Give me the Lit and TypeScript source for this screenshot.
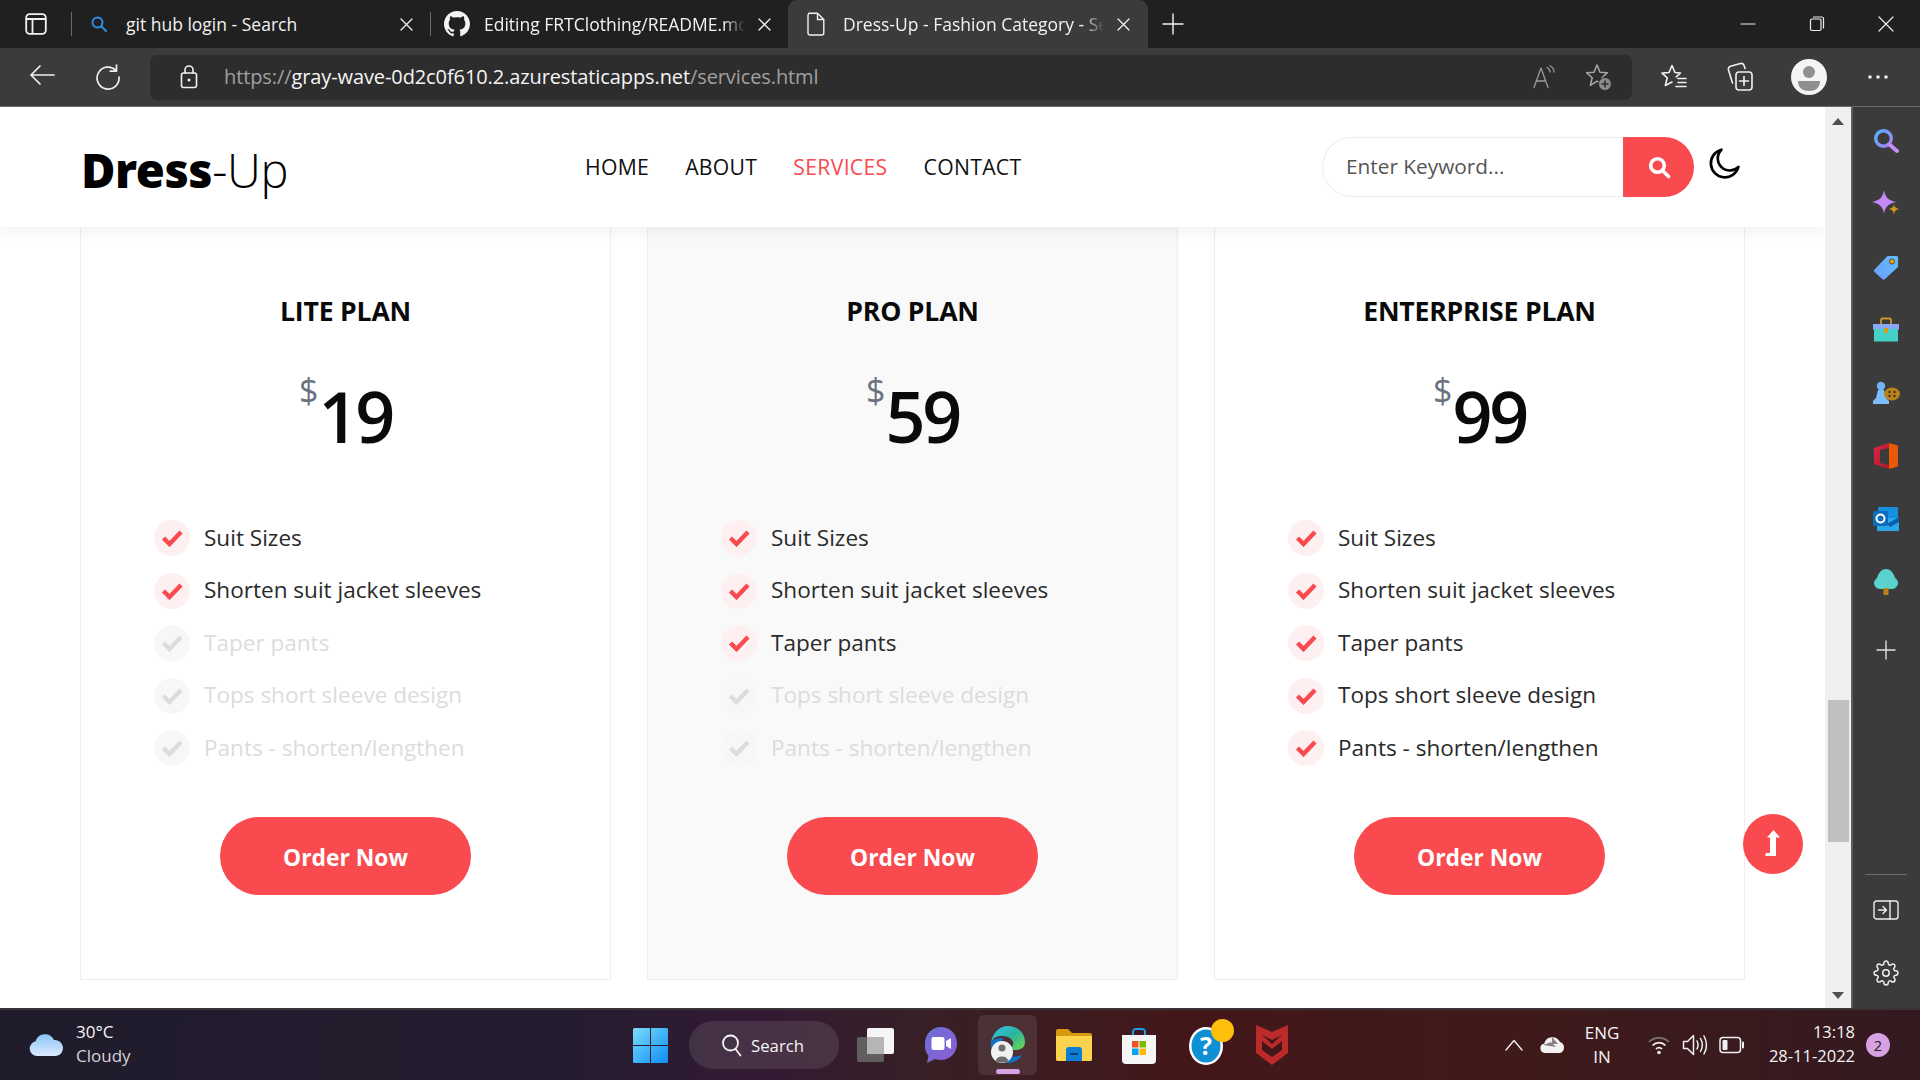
import { LitElement, html, css, svg } from "lit";
import { customElement } from "lit/decorators.js";

const ic = (w: number, h: number, vb: string, body: unknown) =>
  html`<svg width=${w} height=${h} viewBox=${vb} fill="none" stroke-linecap="round" stroke-linejoin="round">${body}</svg>`;

const closeX = (w = 13) => ic(w, w, "0 0 13 13", svg`<path d="M1 1l11 11M12 1L1 12" stroke="#f2f2f2" stroke-width="1.3"/>`);

const check = (c: string) => ic(22, 18, "0 0 22 18", svg`<path d="M2.5 9l6 6L20 3" stroke=${c} stroke-width="4.4" stroke-linecap="butt" stroke-linejoin="miter"/>`);

const FEATURES = ["Suit Sizes", "Shorten suit jacket sleeves", "Taper pants", "Tops short sleeve design", "Pants - shorten/lengthen"];
const PLANS = [
  { name: "LITE PLAN", price: "19", on: 2, alt: false },
  { name: "PRO PLAN", price: "59", on: 3, alt: true },
  { name: "ENTERPRISE PLAN", price: "99", on: 5, alt: false },
];

@customElement("app-root")
export class AppRoot extends LitElement {
  static styles = css`
    :host { display: block; width: 1920px; height: 1080px; overflow: hidden; font-family: "Open Sans", "Noto Sans", sans-serif; background: #fff; }
    svg { display: block; flex: none; }
    .shell { display: grid; grid-template-rows: 48px 58px 1px 901px 72px; height: 1080px; }

    .tabs { background: #202020; display: grid; grid-template-columns: 71px 359px 358px 360px 50px 1fr; align-items: stretch; color: #f2f2f2; font-size: 17.5px; }
    .tabs > .sq { display: flex; align-items: center; justify-content: center; }
    .tab { display: flex; align-items: center; position: relative; min-width: 0; }
    .tab.div::before { content: ""; position: absolute; left: 0; top: 12px; height: 24px; width: 1px; background: #6a6a6a; }
    .tab .ti { width: 54px; display: flex; justify-content: center; flex: none; }
    .tab.first .ti { width: 55px; }
    .tab .tt { flex: 1; min-width: 0; white-space: nowrap; overflow: hidden; -webkit-mask-image: linear-gradient(90deg, #000 92%, transparent 100%); mask-image: linear-gradient(90deg, #000 92%, transparent 100%); }
    .tab .tx { width: 38px; display: flex; justify-content: center; flex: none; margin-right: 5px; }
    .tab.first .tt { -webkit-mask-image: none; mask-image: none; }
    .tab.active { background: #3b3b3b; border-radius: 9px 9px 0 0; }
    .tab.active .ti { width: 55px; }
    .tab.active .tx { margin-right: 6px; }
    .winctl { display: grid; grid-template-columns: repeat(3, 69px); justify-content: end; }
    .winctl > div { display: flex; align-items: center; justify-content: center; }

    .toolbar { background: #3b3b3b; display: grid; grid-template-columns: 150px 1482px 1fr; align-items: center; }
    .nav-btns { display: grid; grid-template-columns: 84px 48px; justify-items: center; }
    .addr { height: 45px; background: #2d2d2d; border-radius: 7px; display: flex; align-items: center; color: #a0a0a0; font-size: 20px; letter-spacing: -0.1px; }
    .addr .lock { width: 74px; padding-left: 4px; box-sizing: border-box; display: flex; justify-content: center; flex: none; }
    .addr b { font-weight: 400; color: #f5f5f5; }
    .addr .url { flex: 1; white-space: nowrap; padding-bottom: 2px; }
    .addr .r1 { width: 54px; display: flex; justify-content: center; }
    .addr .pad { width: 6px; flex: none; }
    .tools { display: grid; grid-template-columns: 84px 48px 90px 48px; justify-items: center; align-items: center; }
    .rule { background: #6a6a6a; }

    .main { display: grid; grid-template-columns: 1825px 26px 69px; min-height: 0; }
    .page { position: relative; overflow: hidden; background: #fff; display: flex; flex-direction: column; }
    header { height: 120px; flex: none; background: #fff; box-shadow: 0 6px 14px rgba(0,0,0,.05); position: relative; z-index: 2; display: grid; grid-template-columns: 504px 737px 372px auto; align-items: center; padding-left: 81px; box-sizing: border-box; }
    .logo { font-size: 47px; line-height: 1; color: #000; padding-top: 6px; letter-spacing: -0.4px; white-space: nowrap; }
    .logo b { font-family: "Noto Sans", sans-serif; font-weight: 900; }
    .logo span { font-family: "Open Sans", sans-serif; font-weight: 300; }
    nav { display: flex; gap: 36px; font-size: 21.2px; color: #111; letter-spacing: 0.3px; padding-bottom: 1px; white-space: nowrap; }
    nav .on { color: #f84a4f; }
    .search { display: flex; height: 60px; align-items: stretch; margin-top: -1px; }
    .search .in { flex: 1; border: 1px solid #eee; border-right: 0; border-radius: 30px 0 0 30px; display: flex; align-items: center; padding: 0 0 1px 23px; color: #555; font-size: 20.8px; }
    .search .go { width: 71px; background: #f84a4f; border-radius: 0 30px 30px 0; display: flex; align-items: center; justify-content: center; }
    .moon { padding-left: 14px; margin-top: -7px; }

    .cards { display: grid; grid-template-columns: repeat(3, 531px); gap: 36px; padding-left: 80px; flex: 1; align-items: start; }
    .card { height: 753px; box-sizing: border-box; border: 1px solid #eee; border-top: 0; padding-top: 66px; }
    .card.alt { background: #f9f9f9; }
    .card h3 { margin: 0; font-size: 26.6px; line-height: 36px; font-weight: 700; color: #0a0a0a; text-align: center; letter-spacing: -0.2px; }
    .price { display: flex; justify-content: center; margin-top: 41px; height: 90px; color: #0a0a0a; font-size: 70px; line-height: 92px; letter-spacing: -3.2px; font-weight: 600; }
    .price sup { font-size: 34px; line-height: 41px; color: #6b7280; font-weight: 400; letter-spacing: 0; vertical-align: baseline; margin-right: 0; }
    ul { list-style: none; margin: 60px 0 0; padding: 0 0 0 73px; display: flex; flex-direction: column; gap: 16.5px; }
    li { display: flex; align-items: center; gap: 14px; height: 36px; color: #2a2a2a; font-size: 22.55px; white-space: nowrap; line-height: 34px; }
    li .dot { width: 36px; height: 36px; border-radius: 50%; background: #fef0f0; display: flex; align-items: center; justify-content: center; flex: none; }
    li span.lab { padding-bottom: 1px; }
    li.off { color: #dcdcdc; }
    li.off .dot { background: #f7f7f7; }
    .order { display: flex; align-items: center; justify-content: center; width: 251px; height: 78px; margin: 51px auto 0; background: #f84a4f; color: #fff; border-radius: 39px; font-size: 22.8px; font-weight: 700; padding-top: 2px; box-sizing: border-box; }
    .totop { position: absolute; left: 1743px; top: 707px; width: 60px; height: 60px; border-radius: 50%; background: #f84a4f; display: flex; align-items: center; justify-content: center; z-index: 3; }

    .scroll { background: #f0f0f0; display: flex; flex-direction: column; align-items: center; }
    .arr { height: 29px; display: flex; align-items: center; justify-content: center; flex: none; }
    .arr.dn { padding-top: 3px; height: 26px; }
    .track { flex: 1; width: 21px; padding-top: 564px; box-sizing: border-box; }
    .thumb { height: 142px; background: #c0c0c0; }

    .side { background: #3b3b3b; border-left: 2px solid #5e5e5e; display: flex; flex-direction: column; align-items: center; padding: 2px 2px 0 0; box-sizing: border-box; }
    .side .i { height: 63px; display: flex; align-items: center; justify-content: center; flex: none; }
    .side .plus { margin-top: 5px; }
    .side .sp { flex: 1; }
    .side .line { width: 42px; height: 1px; background: #6c6c6c; flex: none; }
    .side .b1 { height: 70px; display: flex; align-items: center; justify-content: center; flex: none; }
    .side .b2 { height: 56px; display: flex; align-items: center; justify-content: center; flex: none; margin-bottom: 7px; }

    .taskbar { background: linear-gradient(90deg, #201c2c 0%, #231c2e 28%, #331a33 40%, #372026 48%, #431719 62%, #3f1a1b 80%, #331a20 100%); border-top: 2px solid #3a3438; box-sizing: border-box; display: grid; grid-template-columns: 76px 557px 35px 21px 150px 18px 37px 30px 34px 20px 59px 19px 36px 30px 34px 32px 36px 31px 34px 205px 40px 38px 60px 12px 30px 6px 30px 7px 30px 108px 1fr; align-items: center; color: #f4f4f4; }
    .taskbar .c { display: flex; justify-content: center; align-items: center; height: 70px; position: relative; }
    .taskbar .cloud { padding-left: 16px; }
    .weather { font-size: 17px; line-height: 24px; padding-bottom: 3px; white-space: nowrap; }
    .weather div + div { color: #d4d4d4; }
    .pill { height: 48px; background: rgba(255,255,255,.1); border-radius: 24px; display: flex; align-items: center; padding-left: 32px; gap: 8px; font-size: 16.8px; color: #f4f4f4; }
    .edge { background: rgba(255,255,255,.09); border-radius: 6px; height: 60px !important; }
    .edge::after { content: ""; position: absolute; left: 18px; bottom: 1px; width: 24px; height: 5px; border-radius: 3px; background: #d8a1e3; }
    .lang { font-size: 17px; line-height: 24px; text-align: center; }
    .clock { font-size: 16.5px; line-height: 24px; text-align: right; white-space: nowrap; padding-bottom: 2px; }
    .badge { width: 24px; height: 24px; border-radius: 50%; background: #d8a1e3; color: #222; font-size: 14.5px; display: flex; align-items: center; justify-content: center; margin-left: 11px; }
    .yellow { position: absolute; left: 23px; top: 9px; width: 23px; height: 23px; border-radius: 50%; background: #fdbe0c; }
  `;

  render() {
    return html`<div class="shell">
      ${this.tabs()}
      ${this.toolbar()}
      <div class="rule"></div>
      <div class="main">
        <div class="page">
          <header>
            <div class="logo"><b>Dress</b><span>-Up</span></div>
            <nav><span>HOME</span><span>ABOUT</span><span class="on">SERVICES</span><span>CONTACT</span></nav>
            <div class="search">
              <div class="in">Enter Keyword...</div>
              <div class="go">${ic(24, 24, "0 0 24 24", svg`<circle cx="10.5" cy="10.5" r="6.8" stroke="#fff" stroke-width="3.6"/><path d="M16 16l5.5 5.5" stroke="#fff" stroke-width="3.6"/>`)}</div>
            </div>
            <div class="moon">${ic(33, 33, "0 0 32 32", svg`<path d="M29.5 19.4A13.6 13.6 0 1 1 13 2.6 11 11 0 0 0 29.5 19.4z" stroke="#000" stroke-width="2.6"/>`)}</div>
          </header>
          <div class="cards">
            ${PLANS.map((p) => html`<div class="card ${p.alt ? "alt" : ""}">
              <h3>${p.name}</h3>
              <div class="price"><sup>$</sup><span>${p.price}</span></div>
              <ul>
                ${FEATURES.map((f, i) => html`<li class=${i < p.on ? "" : "off"}><span class="dot">${check(i < p.on ? "#f84a4f" : "#dcdcdc")}</span><span class="lab">${f}</span></li>`)}
              </ul>
              <div class="order">Order Now</div>
            </div>`)}
          </div>
          <div class="totop">
            <svg width="20" height="28" viewBox="0 0 20 28"><path d="M10.5 0L17 7.5h-4V26H2.5v-3H7V7.5H4z" fill="#fff"/></svg>
          </div>
        </div>
        ${this.scrollbar()}
        ${this.sidebar()}
      </div>
      ${this.taskbar()}
    </div>`;
  }

  tabs() {
    return html`<div class="tabs">
      <div class="sq">${ic(22, 22, "0 0 22 22", svg`<rect x="1.2" y="1.2" width="19.6" height="19.6" rx="3.5" stroke="#f2f2f2" stroke-width="1.8"/><path d="M1.5 6h19M7.5 6v14.5" stroke="#f2f2f2" stroke-width="1.8"/>`)}</div>
      <div class="tab div first">
        <div class="ti">${ic(18, 18, "0 0 18 18", svg`<circle cx="7.5" cy="7.5" r="5" stroke="#2f8fe8" stroke-width="2"/><path d="M11.5 11.5l4.5 4.5" stroke="#2f8fe8" stroke-width="2"/>`)}</div>
        <div class="tt">git hub login - Search</div>
        <div class="tx">${closeX()}</div>
      </div>
      <div class="tab div">
        <div class="ti">
          <svg width="26" height="26" viewBox="0 0 16 16"><path fill="#f4f4f4" d="M8 0C3.58 0 0 3.58 0 8c0 3.54 2.29 6.53 5.47 7.59.4.07.55-.17.55-.38 0-.19-.01-.82-.01-1.49-2.01.37-2.53-.49-2.69-.94-.09-.23-.48-.94-.82-1.13-.28-.15-.68-.52-.01-.53.63-.01 1.08.58 1.23.82.72 1.21 1.87.87 2.33.66.07-.52.28-.87.51-1.07-1.78-.2-3.64-.89-3.64-3.95 0-.87.31-1.59.82-2.15-.08-.2-.36-1.02.08-2.12 0 0 .67-.21 2.2.82.64-.18 1.32-.27 2-.27s1.36.09 2 .27c1.53-1.04 2.2-.82 2.2-.82.44 1.1.16 1.92.08 2.12.51.56.82 1.27.82 2.15 0 3.07-1.87 3.75-3.65 3.95.29.25.54.73.54 1.48 0 1.07-.01 1.93-.01 2.2 0 .21.15.46.55.38A8.01 8.01 0 0016 8c0-4.42-3.58-8-8-8z"/></svg>
        </div>
        <div class="tt">Editing FRTClothing/README.md</div>
        <div class="tx">${closeX()}</div>
      </div>
      <div class="tab active">
        <div class="ti">${ic(18, 24, "0 0 18 24", svg`<path d="M2 1.2h8.5L16.8 7.5V21a2 2 0 0 1-2 2H3a2 2 0 0 1-2-2V3z M10.5 1.2V7.5h6.3" stroke="#f2f2f2" stroke-width="1.4"/>`)}</div>
        <div class="tt">Dress-Up - Fashion Category - Se</div>
        <div class="tx">${closeX()}</div>
      </div>
      <div class="sq">${ic(22, 22, "0 0 22 22", svg`<path d="M11 1v20M1 11h20" stroke="#f2f2f2" stroke-width="1.4"/>`)}</div>
      <div class="winctl">
        <div>${ic(16, 16, "0 0 16 16", svg`<path d="M1 8h14" stroke="#eee" stroke-width="1.2"/>`)}</div>
        <div>${ic(16, 16, "0 0 16 16", svg`<rect x="1.5" y="3" width="10.5" height="11.5" rx="1.5" stroke="#eee" stroke-width="1.2"/><path d="M4.5 1h8a2 2 0 0 1 2 2v9" stroke="#eee" stroke-width="1.2"/>`)}</div>
        <div>${ic(16, 16, "0 0 16 16", svg`<path d="M1 1l14 14M15 1L1 15" stroke="#eee" stroke-width="1.2"/>`)}</div>
      </div>
    </div>`;
  }

  toolbar() {
    const w = "#f0f0f0";
    return html`<div class="toolbar">
      <div class="nav-btns">
        ${ic(26, 22, "0 0 26 22", svg`<path d="M25 11H2M11 2l-9 9 9 9" stroke=${w} stroke-width="1.7"/>`)}
        ${ic(26, 26, "0 0 26 26", svg`<path d="M21 6.5A11 11 0 1 0 24 13" stroke=${w} stroke-width="1.7"/><path d="M21.5 1v6.2h-6.2" stroke=${w} stroke-width="1.7"/>`)}
      </div>
      <div class="addr">
        <div class="lock">${ic(18, 24, "0 0 18 24", svg`<rect x="1.5" y="8" width="15" height="14.5" rx="2" stroke=${w} stroke-width="1.6"/><path d="M5 8V5a4 4 0 0 1 8 0v3" stroke=${w} stroke-width="1.6"/><circle cx="9" cy="15" r="1.5" fill=${w}/>`)}</div>
        <div class="url">https://<b>gray-wave-0d2c0f610.2.azurestaticapps.net</b>/services.html</div>
        <div class="r1">${ic(26, 24, "0 0 26 24", svg`<path d="M2 22.5L9 3l7 19.5M4.5 16h9" stroke="#9a9a9a" stroke-width="1.3"/><path d="M15 2.5c2 1 3 2.6 3 4.5M18 .8c2.5 1.4 4 3.6 4 6.2" stroke="#9a9a9a" stroke-width="1.3"/>`)}</div>
        <div class="r1">${ic(28, 28, "0 0 28 28", svg`<path d="M12 2l3 7.2 7.4.6-5.6 4.9 1.8 7.5L12 18.200l-6.600 4.100 1.800-7.500L1.600 9.800 9 9.200z" stroke="#a8a8a8" stroke-width="1.5"/><circle cx="20" cy="21" r="6.500" fill="#8c8c8c" stroke="#2d2d2d" stroke-width="1"/><path d="M20 18v6M17 21h6" stroke="#2d2d2d" stroke-width="1.6"/>`)}</div>
        <div class="pad"></div>
      </div>
      <div class="tools">
        ${ic(28, 28, "0 0 28 28", svg`<path d="M12 2.5l3 7 5.500.5-4.300 3.800M12 2.500l-3 7-7 .6 5.300 4.700-2 7.700L12 19" stroke=${w} stroke-width="1.6"/><path d="M18 15.500h8M18 19.500h8M16 23.500h10" stroke=${w} stroke-width="1.6"/>`)}
        ${ic(28, 30, "0 0 28 30", svg`<rect x="10" y="10" width="16" height="18" rx="3" stroke=${w} stroke-width="1.6"/><path d="M18 14.500v9M13.500 19h9" stroke=${w} stroke-width="1.6"/><path d="M6.500 21L2.500 8a3 3 0 0 1 2-3.700l10-2.800a3 3 0 0 1 3.600 2L19 6.500" stroke=${w} stroke-width="1.6"/>`)}
        <svg width="36" height="36" viewBox="0 0 36 36"><circle cx="18" cy="18" r="18" fill="#f4f4f4"/><circle cx="18" cy="13" r="6" fill="#8f8f8f"/><path d="M7 22h22c0 7-5 10-11 10S7 29 7 22z" fill="#8f8f8f"/></svg>
        ${ic(22, 6, "0 0 22 6", svg`<circle cx="3" cy="3" r="1.8" fill=${w}/><circle cx="11" cy="3" r="1.8" fill=${w}/><circle cx="19" cy="3" r="1.8" fill=${w}/>`)}
      </div>
    </div>`;
  }

  scrollbar() {
    return html`<div class="scroll">
      <div class="arr"><svg width="12" height="7" viewBox="0 0 12 7"><path d="M6 0l6 7H0z" fill="#505050"/></svg></div>
      <div class="track"><div class="thumb"></div></div>
      <div class="arr dn"><svg width="12" height="7" viewBox="0 0 12 7"><path d="M0 0h12L6 7z" fill="#505050"/></svg></div>
    </div>`;
  }

  sidebar() {
    return html`<div class="side">
      <div class="i"><svg width="26" height="26" viewBox="0 0 26 26"><defs><linearGradient id="s1" x1="0" y1="0" x2="1" y2="1"><stop offset="0" stop-color="#50b4ff"/><stop offset="1" stop-color="#b07cf0"/></linearGradient></defs><circle cx="10.5" cy="10.5" r="7.8" fill="none" stroke="url(#s1)" stroke-width="3.4"/><path d="M17 17l7 6" stroke="#c58df2" stroke-width="4" stroke-linecap="round"/></svg></div>
      <div class="i"><svg width="28" height="27" viewBox="0 0 28 27"><path d="M12 0c1.200 7 3.500 10 12 12-8.500 2-10.800 5-12 12-1.200-7-3.500-10-12-12 8.500-2 10.800-5 12-12z" fill="#c488f8"/><path d="M22 14c.4 3 1.600 4.200 5.500 5-3.900.8-5.100 2-5.500 6-.4-4-1.600-5.200-5.500-6 3.900-.8 5.100-2 5.500-5z" fill="#d1941c"/></svg></div>
      <div class="i"><svg width="26" height="26" viewBox="0 0 26 26"><defs><linearGradient id="s3" x1="0" y1="1" x2="1" y2="0"><stop offset="0" stop-color="#6f9cff"/><stop offset="1" stop-color="#5fc0fa"/></linearGradient></defs><path d="M1.500 15.500L14 2.500a2 2 0 0 1 1.500-.6h8a1.600 1.600 0 0 1 1.600 1.600v8.500a2 2 0 0 1-.6 1.400L12 25a2 2 0 0 1-2.800 0L1.500 18a2 2 0 0 1 0-2.500z" fill="url(#s3)"/><circle cx="19" cy="7.500" r="2.600" fill="#e8a21c" stroke="#3a3a3a" stroke-width=".8"/></svg></div>
      <div class="i"><svg width="28" height="26" viewBox="0 0 28 26"><path d="M9 7V3a1.500 1.500 0 0 1 1.500-1.500h7A1.500 1.500 0 0 1 19 3v4" fill="none" stroke="#c79a2c" stroke-width="1.8"/><rect x="1" y="7" width="26" height="5.500" fill="#8aa6f5"/><rect x="2" y="12" width="24" height="12.500" fill="#45d0c8"/><rect x="12" y="11" width="4" height="5" fill="#d39a22"/></svg></div>
      <div class="i"><svg width="28" height="24" viewBox="0 0 28 24"><circle cx="9" cy="5" r="4.200" fill="#6fb4f5"/><path d="M6 9h6l2 8 3 3v3H1v-3l3-3z" fill="#7dbdfb"/><ellipse cx="20" cy="13" rx="8" ry="6.500" fill="#b9831c"/><circle cx="17.500" cy="11" r="1.200" fill="#4a3308"/><circle cx="22.500" cy="11" r="1.200" fill="#4a3308"/><circle cx="17.500" cy="15" r="1.200" fill="#4a3308"/><circle cx="22.500" cy="15" r="1.200" fill="#4a3308"/></svg></div>
      <div class="i"><svg width="26" height="28" viewBox="0 0 26 28"><defs><linearGradient id="s6" x1="0" y1="0" x2="1" y2="1"><stop offset="0" stop-color="#e0244a"/><stop offset="1" stop-color="#a81c24"/></linearGradient></defs><path d="M1 6L16 1v26L1 22z" fill="url(#s6)"/><path d="M16 1l9 2.500v21L16 27z" fill="#e85a08"/><path d="M7 8l9-2v17l-9-2z" fill="#3b3b3b"/></svg></div>
      <div class="i"><svg width="26" height="26" viewBox="0 0 26 26"><rect x="5" y="1" width="20" height="14" rx="1" fill="#1490df"/><path d="M4 12h22v12a1 1 0 0 1-1 1H5a1 1 0 0 1-1-1z" fill="#28a8ea"/><path d="M14 18l12-7v5l-9 5z" fill="#0a5fa8"/><rect x="0" y="5" width="15" height="15" rx="1.500" fill="#0f6cbd"/><circle cx="7.500" cy="12.500" r="4" fill="none" stroke="#fff" stroke-width="2"/></svg></div>
      <div class="i"><svg width="26" height="28" viewBox="0 0 26 28"><path d="M13 1c5 0 8 5 9 9 2 1 3 3 3 5 0 3-3 6-6 6H7c-3 0-6-3-6-6 0-2 1.500-4 3-5 1-4 4-9 9-9z" fill="#5ad2cd"/><rect x="10.500" y="20" width="5" height="7" fill="#b9831c"/></svg></div>
      <div class="i plus">${ic(20, 20, "0 0 20 20", svg`<path d="M10 1v18M1 10h18" stroke="#e0e0e0" stroke-width="1.4"/>`)}</div>
      <div class="sp"></div>
      <div class="line"></div>
      <div class="b1">${ic(26, 20, "0 0 26 20", svg`<rect x="1" y="1" width="24" height="18" rx="2.500" stroke="#eee" stroke-width="1.4"/><path d="M17 1v18M5.500 10h7.500M10 6.500l3.500 3.500-3.500 3.500" stroke="#eee" stroke-width="1.4"/>`)}</div>
      <div class="b2"><svg width="26" height="26" viewBox="0 0 24 24" fill="none" stroke="#eee" stroke-width="1.400" stroke-linejoin="round"><circle cx="12" cy="12" r="3"/><path d="M19.400 15a1.650 1.650 0 0 0 .33 1.820l.06.06a2 2 0 0 1 0 2.830 2 2 0 0 1-2.830 0l-.06-.06a1.650 1.650 0 0 0-1.820-.33 1.650 1.650 0 0 0-1 1.510V21a2 2 0 0 1-2 2 2 2 0 0 1-2-2v-.09A1.650 1.650 0 0 0 9 19.400a1.650 1.650 0 0 0-1.820.33l-.06.06a2 2 0 0 1-2.830 0 2 2 0 0 1 0-2.830l.06-.06a1.650 1.650 0 0 0 .33-1.820 1.650 1.650 0 0 0-1.510-1H3a2 2 0 0 1-2-2 2 2 0 0 1 2-2h.09A1.650 1.650 0 0 0 4.600 9a1.650 1.650 0 0 0-.33-1.820l-.06-.06a2 2 0 0 1 0-2.830 2 2 0 0 1 2.830 0l.06.06a1.650 1.650 0 0 0 1.820.33H9a1.650 1.650 0 0 0 1-1.510V3a2 2 0 0 1 2-2 2 2 0 0 1 2 2v.09a1.650 1.650 0 0 0 1 1.510 1.650 1.650 0 0 0 1.820-.33l.06-.06a2 2 0 0 1 2.830 0 2 2 0 0 1 0 2.830l-.06.06a1.650 1.650 0 0 0-.33 1.820V9a1.650 1.650 0 0 0 1.510 1H21a2 2 0 0 1 2 2 2 2 0 0 1-2 2h-.09a1.650 1.650 0 0 0-1.510 1z"/></svg></div>
    </div>`;
  }

  taskbar() {
    return html`<div class="taskbar">
      <div class="c cloud"><svg width="36" height="24" viewBox="0 0 36 24"><defs><linearGradient id="cl" x1="0" y1="0" x2="0" y2="1"><stop offset="0" stop-color="#8cc4f8"/><stop offset="1" stop-color="#dbeafd"/></linearGradient></defs><path d="M9 23a7.500 7.500 0 0 1-1.500-14.800A10 10 0 0 1 26 7a8 8 0 0 1 2 16z" fill="url(#cl)"/></svg></div>
      <div class="weather"><div>30°C</div><div>Cloudy</div></div>
      <div class="c"><svg width="35" height="35" viewBox="0 0 35 35"><defs><linearGradient id="w1" x1="0" y1="0" x2="1" y2="1"><stop offset="0" stop-color="#7cdcfb"/><stop offset="1" stop-color="#0b8df5"/></linearGradient></defs><path d="M0 1.500a1.500 1.500 0 0 1 1.500-1.500H17v17H0zM18 0h15.500A1.500 1.500 0 0 1 35 1.500V17H18zM0 18h17v17H1.500A1.500 1.500 0 0 1 0 33.500zM18 18h17v15.500a1.500 1.500 0 0 1-1.500 1.500H18z" fill="url(#w1)"/></svg></div>
      <div></div>
      <div class="pill">${ic(22, 24, "0 0 22 24", svg`<circle cx="9.500" cy="10" r="7.500" stroke="#f4f4f4" stroke-width="1.800"/><path d="M14.500 16l5 6.500" stroke="#f4f4f4" stroke-width="1.800"/>`)}<span>Search</span></div>
      <div></div>
      <div class="c"><svg width="37" height="34" viewBox="0 0 37 34"><rect x="10" y="0" width="27" height="26" rx="2" fill="#f5f5f5"/><rect x="0" y="9" width="27" height="25" rx="2" fill="#6a6a6a" fill-opacity=".85"/><rect x="10" y="9" width="17" height="17" fill="#b5b5b5"/></svg></div>
      <div></div>
      <div class="c"><svg width="34" height="38" viewBox="0 0 34 38"><defs><linearGradient id="ch" x1="0" y1="0" x2="1" y2="1"><stop offset="0" stop-color="#6d6fd8"/><stop offset="1" stop-color="#8a5ed0"/></linearGradient></defs><path d="M17 1c9 0 16 7 16 16.500S26 34 17 34c-2 0-4-.3-6-1l-8 4 1.500-7A17 17 0 0 1 1 17.500C1 8 8 1 17 1z" fill="url(#ch)"/><rect x="7.500" y="11" width="13" height="13" rx="2" fill="#fff"/><path d="M22 15l5-3v11l-5-3z" fill="#fff"/></svg></div>
      <div></div>
      <div class="c edge"><svg width="36" height="40" viewBox="0 0 36 40"><defs><linearGradient id="e1" x1="0" y1="0" x2="1" y2="1"><stop offset="0" stop-color="#36c5f0"/><stop offset=".5" stop-color="#2db3a0"/><stop offset="1" stop-color="#6fd84a"/></linearGradient></defs><path d="M18 1c10 0 17 7 17 16 0 6-5 8-10 8-3 0-5-1-5-2 2-1 4-3 3-6-1-4-6-6-12-6-4 0-8 2-10 6C3 8 9 1 18 1z" fill="url(#e1)"/><path d="M1 17c-1 11 6 21 17 21 6 0 11-3 14-8-6 3-14 2-18-4-3-4-3-9-1-13-6 0-10 1-12 4z" fill="#1273c4"/><circle cx="12" cy="27" r="11" fill="#f0f0f0"/><circle cx="12" cy="23" r="3.500" fill="#6c6c6c"/><path d="M5.500 36a7 7 0 0 1 13 0c-3 2-9 2-13 0z" fill="#6c6c6c"/></svg></div>
      <div></div>
      <div class="c"><svg width="36" height="32" viewBox="0 0 36 32"><path d="M0 2a2 2 0 0 1 2-2h10l4 4h18a2 2 0 0 1 2 2v24a2 2 0 0 1-2 2H2a2 2 0 0 1-2-2z" fill="#d89a0c"/><path d="M0 7h36v23a2 2 0 0 1-2 2H2a2 2 0 0 1-2-2z" fill="#fcd34d"/><path d="M10 21a3 3 0 0 1 3-3h10a3 3 0 0 1 3 3v11H10z" fill="#0b7fd6"/><rect x="14" y="24" width="8" height="2" fill="#063e70"/></svg></div>
      <div></div>
      <div class="c"><svg width="34" height="37" viewBox="0 0 34 37"><path d="M11 8V4a3 3 0 0 1 3-2h6a3 3 0 0 1 3 2v4" fill="none" stroke="#1d9bf0" stroke-width="2"/><path d="M0 8h34v25a4 4 0 0 1-4 4H4a4 4 0 0 1-4-4z" fill="#f5f5f5"/><rect x="10" y="14" width="6.500" height="6.500" fill="#f25022"/><rect x="17.500" y="14" width="6.500" height="6.500" fill="#7fba00"/><rect x="10" y="21.500" width="6.500" height="6.500" fill="#00a4ef"/><rect x="17.500" y="21.500" width="6.500" height="6.500" fill="#ffb900"/></svg></div>
      <div></div>
      <div class="c"><svg width="36" height="42" viewBox="0 0 36 42"><ellipse cx="18" cy="22" rx="17" ry="19" fill="#fff"/><ellipse cx="18" cy="22" rx="14.500" ry="16.500" fill="#0f8fd4"/><text x="18" y="31" font-family="Open Sans, sans-serif" font-size="25" font-weight="700" fill="#fff" text-anchor="middle">?</text></svg><span class="yellow"></span></div>
      <div></div>
      <div class="c"><svg width="34" height="40" viewBox="0 0 34 40"><path d="M1 0l16 7 16-7v28L17 40 1 28z" fill="#bd2a2a"/><path d="M7 10l10 5 10-5v15l-10 7-10-7z" fill="#401618"/><path d="M7 10l10 9 10-9v6l-10 8-10-8z" fill="#bd2a2a"/></svg></div>
      <div></div>
      <div class="c">${ic(18, 12, "0 0 18 12", svg`<path d="M1 11l8-9.500L17 11" stroke="#eee" stroke-width="1.400"/>`)}</div>
      <div class="c"><svg width="26" height="18" viewBox="0 0 26 18"><path d="M5 17a4.800 4.800 0 0 1-.8-9.500A8.500 8.500 0 0 1 20 6a5.800 5.800 0 0 1 0 11z" fill="#f2f2f2"/><path d="M3 9l8-3 5 5z M12 1l6 7h-6z" fill="#8a8080"/></svg></div>
      <div class="c lang"><div>ENG<br />IN</div></div>
      <div></div>
      <div class="c"><svg width="22" height="20" viewBox="0 0 22 20"><path d="M1 7a14 14 0 0 1 20 0" stroke="#777" stroke-width="1.700" fill="none"/><path d="M4.500 10.500a9 9 0 0 1 13 0M8 14a4.500 4.500 0 0 1 6 0" stroke="#f0f0f0" stroke-width="1.700" fill="none"/><circle cx="11" cy="17.500" r="1.800" fill="#f0f0f0"/></svg></div>
      <div></div>
      <div class="c">${ic(26, 24, "0 0 26 24", svg`<path d="M1.500 8.500h4l6-6v19l-6-6h-4z" stroke="#f0f0f0" stroke-width="1.500"/><path d="M15 8c1.300 2.500 1.300 5.500 0 8M18.500 5.500c2.300 4 2.300 9 0 13M22 3c3 5.500 3 12.500 0 18" stroke="#f0f0f0" stroke-width="1.500"/>`)}</div>
      <div></div>
      <div class="c">${ic(26, 18, "0 0 26 18", svg`<rect x="1" y="1.500" width="20.500" height="15" rx="3" stroke="#f0f0f0" stroke-width="1.500"/><rect x="3.500" y="4" width="5" height="10" rx="1" fill="#f0f0f0"/><path d="M24 6.500v5" stroke="#f0f0f0" stroke-width="2"/>`)}</div>
      <div class="clock">13:18<br />28-11-2022</div>
      <div class="badge">2</div>
    </div>`;
  }
}
